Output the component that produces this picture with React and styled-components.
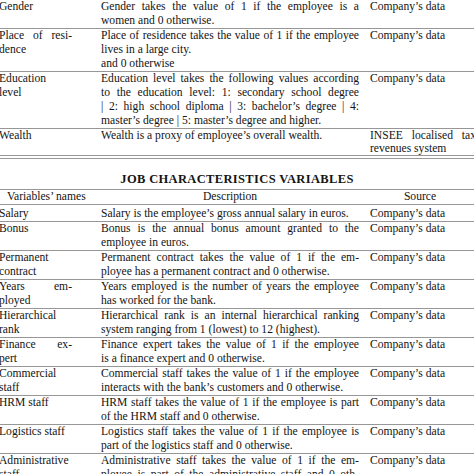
import React from "react";
import styled, { createGlobalStyle } from "styled-components";

const GlobalStyle = createGlobalStyle`
  html, body {
    margin: 0;
    padding: 0;
    background: #ffffff;
    overflow: hidden;
  }
  body {
    font-family: "Liberation Serif", "Times New Roman", serif;
    color: #141414;
  }
`;

const Page = styled.div`
  width: 490px;
  display: flex;
  flex-direction: column;
`;

const Table = styled.div`
  display: flex;
  flex-direction: column;
`;

const Row = styled.div`
  display: grid;
  grid-template-columns: 101px 269px 112px;
  padding-top: ${(p) => p.$padTop || 0}px;
  border-bottom: ${(p) => (p.$rule === "none" ? "0" : "1px solid #979797")};
  line-height: ${(p) => p.$lh || 14}px;
`;

const DoubleRule = styled.div`
  height: 2px;
  border-top: 1px solid #979797;
  border-bottom: 1px solid #979797;
`;

const Cell = styled.div`
  font-size: 11.6px;
  padding-right: ${(p) => p.$pr || 0}px;
  margin-left: ${(p) => p.$ml || 0}px;
`;

const Line = styled.div`
  text-align: ${(p) => (p.$j ? "justify" : "left")};
  text-align-last: ${(p) => (p.$j ? "justify" : "left")};
`;

const Title = styled.div`
  text-align: center;
  font-weight: bold;
  font-size: 12.5px;
  letter-spacing: 0.35px;
  padding: 13px 0 3px 0;
  width: 474px;
  line-height: 14px;
  border-bottom: 1px solid #979797;
`;

const HeadCell = styled.div`
  font-size: 11.6px;
  text-align: ${(p) => p.$align || "center"};
  padding-left: ${(p) => p.$pl || 0}px;
  padding-right: ${(p) => p.$pr || 0}px;
  white-space: nowrap;
`;

const L = (s) => ({ t: s, j: true });

const table1 = [
  {
    a: ["Gender"],
    b: [L("Gender takes the value of 1 if the employee is a"), "women and 0 otherwise."],
    c: ["Company’s data"],
  },
  {
    a: [L("Place of resi-"), "dence"],
    b: [
      L("Place of residence takes the value of 1 if the employee"),
      "lives in a large city.",
      "and 0 otherwise",
    ],
    c: ["Company’s data"],
  },
  {
    a: ["Education", "level"],
    b: [
      L("Education level takes the following values according"),
      L("to the education level: 1: secondary school degree"),
      L("| 2: high school diploma | 3: bachelor’s degree | 4:"),
      "master’s degree | 5: master’s degree and higher.",
    ],
    c: ["Company’s data"],
  },
  {
    a: ["Wealth"],
    b: ["Wealth is a proxy of employee’s overall wealth."],
    c: [L("INSEE localised tax"), "revenues system"],
    lh: 13,
    rule: "none",
  },
];

const table2 = [
  {
    a: ["Salary"],
    b: ["Salary is the employee’s gross annual salary in euros."],
    c: ["Company’s data"],
    pad: 2,
  },
  {
    a: ["Bonus"],
    b: [L("Bonus is the annual bonus amount granted to the"), "employee in euros."],
    c: ["Company’s data"],
  },
  {
    a: ["Permanent", "contract"],
    b: [
      L("Permanent contract takes the value of 1 if the em-"),
      "ployee has a permanent contract and 0 otherwise.",
    ],
    c: ["Company’s data"],
  },
  {
    a: [L("Years em-"), "ployed"],
    b: [L("Years employed is the number of years the employee"), "has worked for the bank."],
    c: ["Company’s data"],
  },
  {
    a: ["Hierarchical", "rank"],
    b: [
      L("Hierarchical rank is an internal hierarchical ranking"),
      "system ranging from 1 (lowest) to 12 (highest).",
    ],
    c: ["Company’s data"],
  },
  {
    a: [L("Finance ex-"), "pert"],
    b: [L("Finance expert takes the value of 1 if the employee"), "is a finance expert and 0 otherwise."],
    c: ["Company’s data"],
  },
  {
    a: ["Commercial", "staff"],
    b: [
      L("Commercial staff takes the value of 1 if the employee"),
      "interacts with the bank’s customers and 0 otherwise.",
    ],
    c: ["Company’s data"],
  },
  {
    a: ["HRM staff"],
    b: [L("HRM staff takes the value of 1 if the employee is part"), "of the HRM staff and 0 otherwise."],
    c: ["Company’s data"],
  },
  {
    a: ["Logistics staff"],
    b: [L("Logistics staff takes the value of 1 if the employee is"), "part of the logistics staff and 0 otherwise."],
    c: ["Company’s data"],
  },
  {
    a: ["Administrative", "staff"],
    b: [
      L("Administrative staff takes the value of 1 if the em-"),
      L("ployee is part of the administrative staff and 0 oth-"),
    ],
    c: ["Company’s data"],
    rule: "none",
  },
];

const Lines = ({ items }) =>
  items.map((it, i) =>
    typeof it === "string" ? (
      <Line key={i}>{it}</Line>
    ) : (
      <Line key={i} $j>
        {it.t}
      </Line>
    )
  );

const DataRow = ({ row }) => (
  <Row $rule={row.rule} $lh={row.lh} $padTop={row.pad}>
    <Cell $pr={29} $ml={-1}>
      <Lines items={row.a} />
    </Cell>
    <Cell $pr={11}>
      <Lines items={row.b} />
    </Cell>
    <Cell $pr={6}>
      <Lines items={row.c} />
    </Cell>
  </Row>
);

export default function App() {
  return (
    <Page>
      <GlobalStyle />
      <Table>
        {table1.map((r, i) => (
          <DataRow key={i} row={r} />
        ))}
        <DoubleRule />
      </Table>
      <Title>JOB CHARACTERISTICS VARIABLES</Title>
      <Table>
        <Row>
          <HeadCell $align="left" $pl={7}>
            Variables’ names
          </HeadCell>
          <HeadCell $pr={11}>Description</HeadCell>
          <HeadCell $pr={12}>Source</HeadCell>
        </Row>
        {table2.map((r, i) => (
          <DataRow key={i} row={r} />
        ))}
      </Table>
    </Page>
  );
}
